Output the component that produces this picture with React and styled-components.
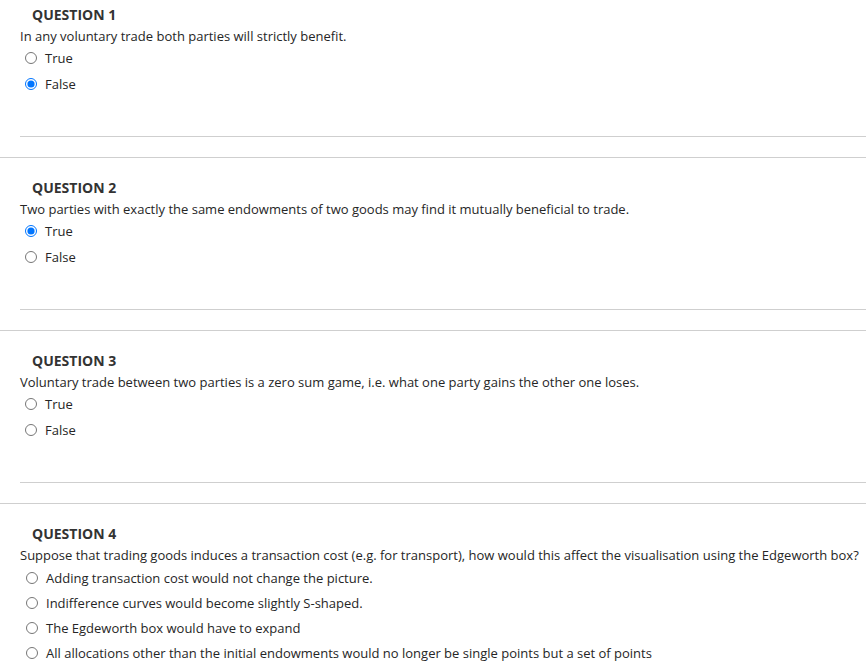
import React from "react";
import styled, { createGlobalStyle } from "styled-components";

const Global = createGlobalStyle`
  html, body { margin: 0; padding: 0; background: #fff; }
  body { font-family: "Open Sans", "Liberation Sans", sans-serif; color: #262626; }
`;

const Page = styled.div`
  display: flex;
  flex-direction: column;
  width: 866px;
`;

const Section = styled.section`
  display: flex;
  flex-direction: column;
  padding-top: ${(p) => (p.$first ? "5px" : "20px")};
  border-top: ${(p) => (p.$first ? "none" : "1px solid #cfcfcf")};
`;

const Heading = styled.h3`
  margin: 0 0 0 32px;
  font-size: 14px;
  line-height: 20px;
  font-weight: 700;
  color: #333;
  text-transform: uppercase;
`;

const Prompt = styled.p`
  margin: 1px 0 0 20px;
  font-size: 13px;
  line-height: 20px;
  color: #262626;
  white-space: nowrap;
`;

const Options = styled.div`
  display: flex;
  flex-direction: column;
  margin-top: ${(p) => (p.$wide ? "0" : "-1px")};
`;

const Option = styled.label`
  display: flex;
  align-items: center;
  height: ${(p) => (p.$wide ? "25px" : "26px")};
  padding-left: ${(p) => (p.$wide ? "26px" : "25px")};
  font-size: 13px;
  color: #262626;
  gap: 8px;
`;

const Radio = styled.input.attrs({ type: "radio" })`
  margin: 0;
  width: 12px;
  height: 12px;
  accent-color: #0075ff;
`;

const Divider = styled.hr`
  margin: 39px 0 20px 20px;
  border: none;
  border-top: 1px solid #cfcfcf;
  height: 0;
`;

const questions = [
  {
    n: 1,
    text: "In any voluntary trade both parties will strictly benefit.",
    options: ["True", "False"],
    checked: 1,
  },
  {
    n: 2,
    text: "Two parties with exactly the same endowments of two goods may find it mutually beneficial to trade.",
    options: ["True", "False"],
    checked: 0,
  },
  {
    n: 3,
    text: "Voluntary trade between two parties is a zero sum game, i.e. what one party gains the other one loses.",
    options: ["True", "False"],
    checked: -1,
  },
  {
    n: 4,
    text: "Suppose that trading goods induces a transaction cost (e.g. for transport), how would this affect the visualisation using the Edgeworth box?",
    options: [
      "Adding transaction cost would not change the picture.",
      "Indifference curves would become slightly S-shaped.",
      "The Egdeworth box would have to expand",
      "All allocations other than the initial endowments would no longer be single points but a set of points",
    ],
    checked: -1,
    wide: true,
  },
];

export default function App() {
  return (
    <Page>
      <Global />
      {questions.map((q, i) => (
        <Section key={q.n} $first={i === 0}>
          <Heading>Question {q.n}</Heading>
          <Prompt>{q.text}</Prompt>
          <Options $wide={q.wide}>
            {q.options.map((o, j) => (
              <Option key={j} $wide={q.wide}>
                <Radio name={`q${q.n}`} defaultChecked={j === q.checked} />
                {o}
              </Option>
            ))}
          </Options>
          {!q.wide && <Divider />}
        </Section>
      ))}
    </Page>
  );
}
